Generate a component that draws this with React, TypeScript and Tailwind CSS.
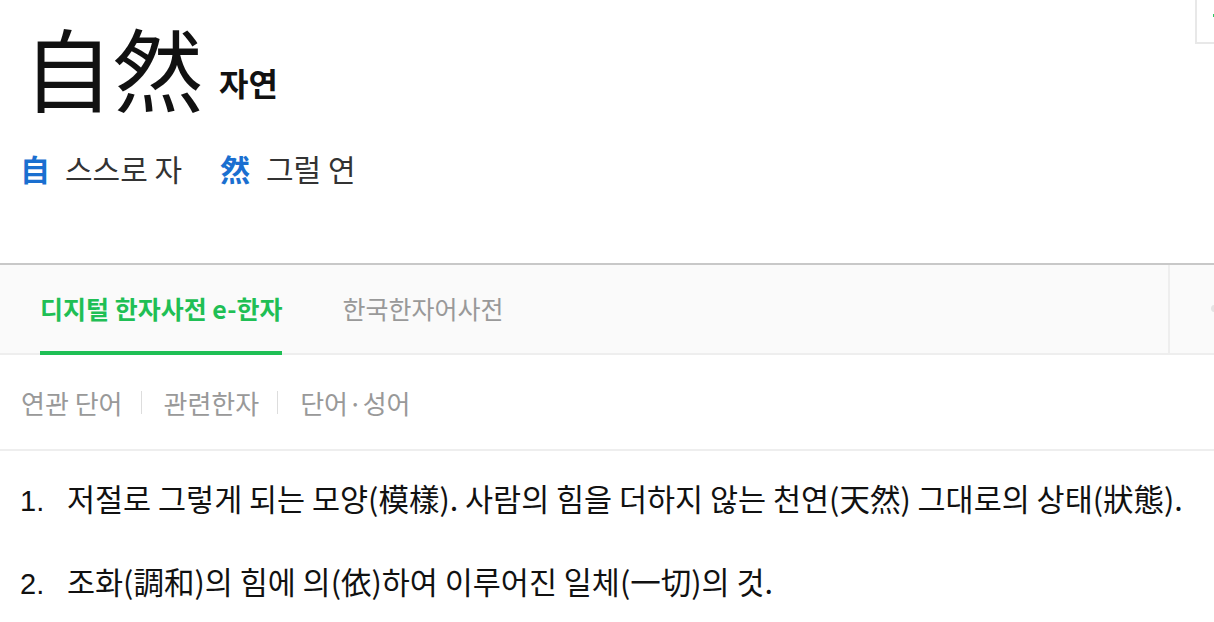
import React from "react";

const F = { fontFamily: '"Noto Sans CJK KR", "Noto Sans", sans-serif' } as React.CSSProperties;
const NUM = { fontFamily: '"Liberation Sans", "Noto Sans CJK KR", sans-serif' } as React.CSSProperties;

export default function App() {
  return (
    <div className="relative w-[1214px] h-[622px] overflow-hidden bg-white text-[#111]" style={F}>
      {/* top-right box */}
      <div className="absolute right-0 top-0 w-[19px] h-[44px] border-l-2 border-b-2 border-[#e8e8e8] bg-white">
        <span className="absolute right-0 top-[14px] w-[1px] h-[3px] bg-[#2fc864]" />
      </div>

      {/* header */}
      <div className="h-[263px] pl-[23px] pt-[21px]">
        <div className="flex items-end">
          <span className="text-[90px] leading-[90px] font-normal">自然</span>
          <span className="text-[32px] leading-[32px] font-bold ml-[16px] mb-[13px]">자연</span>
        </div>
        <div className="flex items-center mt-[42px] -ml-[3px] text-[30px] leading-[30px]">
          <span className="font-bold text-[#1a6fd0] w-[45px]">自</span>
          <span className="text-[#333] w-[155px]">스스로 자</span>
          <span className="font-bold text-[#1a6fd0] w-[46px]">然</span>
          <span className="text-[#333]">그럴 연</span>
        </div>
      </div>

      {/* tabs */}
      <div className="border-t-2 border-[#c8c8c8]">
        <div className="flex h-[90px] bg-[#fafafa] border-b-2 border-[#eeeeee]">
          <div className="flex flex-1 pl-[40px]">
            <div className="relative flex items-center h-full">
              <span className="text-[25px] font-bold text-[#1fbf55]">디지털 한자사전 e-한자</span>
              <span className="absolute left-0 right-0 bottom-[-2px] h-[4px] bg-[#1fbf55]" />
            </div>
            <div className="flex items-center h-full ml-[60px]">
              <span className="text-[25px] text-[#999]">한국한자어사전</span>
            </div>
          </div>
          <div className="w-[46px] h-full border-l-2 border-[#eeeeee] relative">
            <span className="absolute right-[-4px] top-[40px] w-[7px] h-[7px] rounded-full bg-[#e4e4e4]" />
          </div>
        </div>
      </div>

      {/* sub nav */}
      <div className="h-[96px] border-b-2 border-[#eeeeee] flex items-center pl-[21px] text-[26px] text-[#999]">
        <span>연관 단어</span>
        <span className="ml-[18px] mr-[22px] w-[1px] h-[23px] bg-[#ddd]" />
        <span>관련한자</span>
        <span className="ml-[18px] mr-[22px] w-[1px] h-[23px] bg-[#ddd]" />
        <span>단어·성어</span>
      </div>

      {/* definitions */}
      <div className="pl-[20px] pt-[27px] text-[30.5px] leading-[40px] text-[#111]">
        <div className="flex items-baseline">
          <span className="w-[47px] text-[29px]" style={NUM}>1.</span>
          <span>저절로 그렇게 되는 모양(模樣). 사람의 힘을 더하지 않는 천연(天然) 그대로의 상태(狀態).</span>
        </div>
        <div className="flex items-baseline mt-[40px]">
          <span className="w-[47px] text-[29px]" style={NUM}>2.</span>
          <span>조화(調和)의 힘에 의(依)하여 이루어진 일체(一切)의 것.</span>
        </div>
      </div>
    </div>
  );
}
